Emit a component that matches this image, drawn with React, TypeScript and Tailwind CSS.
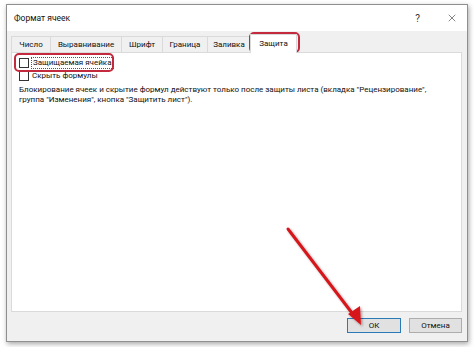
import { X } from "lucide-react"

const tabs = ["Число", "Выравнивание", "Шрифт", "Граница", "Заливка"]
const tabWidths = ["w-[39px]", "w-[71px]", "w-[41px]", "w-[45px]", "w-[43px]"]

const Checkbox = () => (
  <span className="w-[10px] h-[10px] border border-[#333] bg-white shrink-0" />
)

export default function App() {
  return (
    <div
      className="relative w-[474px] h-[347px] bg-white pt-[4px] pl-[6px] text-[8px] text-[#111]"
      style={{ fontFamily: 'Roboto, "Noto Sans", sans-serif' }}
    >
      {/* dialog window */}
      <div className="w-[462px] h-[338px] border border-[#8f8f8f] bg-[#f0f0f0] flex flex-col shadow-[1px_2px_5px_rgba(0,0,0,0.35)]">
        <div className="h-[26px] bg-white flex items-center pl-[7px] pr-[9px]">
          <span className="text-[8.5px]">Формат ячеек</span>
          <span className="ml-auto text-[10px] mr-[26px] text-[#333]">?</span>
          <X size={12} strokeWidth={1.2} className="text-[#333]" />
        </div>

        {/* tabs */}
        <div className="flex items-end h-[21px] pl-[4px]">
          {tabs.map((t, i) => (
            <div
              key={t}
              className={`${tabWidths[i]} h-[16px] flex items-center justify-center border-t border-l border-[#dadada]`}
            >
              {t}
            </div>
          ))}
          <div className="w-[47px] h-[19px] bg-white border border-b-0 border-[#dadada] flex items-center justify-center -mb-px relative z-10">
            Защита
          </div>
        </div>

        {/* panel */}
        <div className="ml-[4px] mr-[5px] h-[260px] bg-white border border-[#dadada] pt-[4px] pl-[7px] pr-[4px]">
          <div className="flex items-center gap-[2px] h-[12px]">
            <Checkbox />
            <span className="border border-dotted border-[#555] px-[1px] leading-[10px]">Защищаемая ячейка</span>
          </div>
          <div className="flex items-center gap-[3px] h-[12px] mt-[1px]">
            <Checkbox />
            <span>Скрыть формулы</span>
          </div>
          <p className="mt-[3px] leading-[9.5px] whitespace-nowrap">
            Блокирование ячеек и скрытие формул действуют только после защиты листа (вкладка "Рецензирование",
            <br />
            группа "Изменения", кнопка "Защитить лист").
          </p>
        </div>

        {/* buttons */}
        <div className="flex justify-end gap-[8px] mt-[6px] pr-[5px]">
          <button className="w-[54px] h-[15px] bg-[#e1e1e1] border-[1.5px] border-[#2a7ab8] flex items-center justify-center">
            ОК
          </button>
          <button className="w-[53px] h-[15px] bg-[#e1e1e1] border border-[#adadad] flex items-center justify-center">
            Отмена
          </button>
        </div>
      </div>

      {/* red highlight outlines */}
      <div className="absolute left-[14px] top-[53px] w-[100px] h-[19px] rounded-[5px] border-2 border-[#c42a3e]" />
      <div className="absolute left-[249px] top-[32px] w-[51px] h-[21px] rounded-[5px] border-2 border-[#c42a3e]" />

      {/* arrow */}
      <svg className="absolute left-0 top-0 pointer-events-none" width="474" height="347" viewBox="0 0 474 347">
        <defs>
          <filter id="sh" x="-20%" y="-20%" width="140%" height="140%">
            <feDropShadow dx="1.5" dy="1.5" stdDeviation="1.2" floodColor="#000" floodOpacity="0.35" />
          </filter>
        </defs>
        <g filter="url(#sh)">
          <line x1="288" y1="229" x2="352" y2="313" stroke="#d7181c" strokeWidth="3" strokeLinecap="round" />
          <polygon points="361,325 348,314 360,306" fill="#d7181c" />
        </g>
      </svg>
    </div>
  )
}
